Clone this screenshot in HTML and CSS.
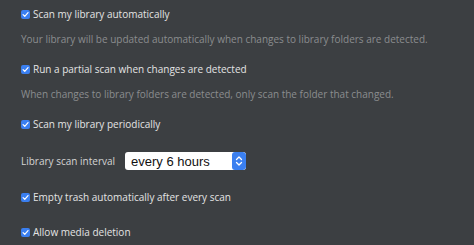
FILE: index.html
```html
<!DOCTYPE html>
<html>
<head>
<meta charset="utf-8">
<link rel="stylesheet" href="styles.css">
</head>
<body>
<div class="settings">
  <div class="check-row">
    <span class="box"><svg viewBox="0 0 10 10" width="9" height="9"><path d="M2.3 5.2 L4.2 7.1 L7.8 2.8" fill="none" stroke="#fff" stroke-width="1.3" stroke-linecap="round" stroke-linejoin="round"/></svg></span>
    <span class="label">Scan my library automatically</span>
  </div>
  <div class="desc">Your library will be updated automatically when changes to library folders are detected.</div>
  <div class="check-row">
    <span class="box"><svg viewBox="0 0 10 10" width="9" height="9"><path d="M2.3 5.2 L4.2 7.1 L7.8 2.8" fill="none" stroke="#fff" stroke-width="1.3" stroke-linecap="round" stroke-linejoin="round"/></svg></span>
    <span class="label">Run a partial scan when changes are detected</span>
  </div>
  <div class="desc">When changes to library folders are detected, only scan the folder that changed.</div>
  <div class="check-row">
    <span class="box"><svg viewBox="0 0 10 10" width="9" height="9"><path d="M2.3 5.2 L4.2 7.1 L7.8 2.8" fill="none" stroke="#fff" stroke-width="1.3" stroke-linecap="round" stroke-linejoin="round"/></svg></span>
    <span class="label">Scan my library periodically</span>
  </div>
  <div class="select-row">
    <span class="select-label">Library scan interval</span>
    <span class="select">
      <span class="select-text">every 6 hours</span>
      <span class="stepper"><svg viewBox="0 0 14 18" width="14" height="18"><path d="M4.5 7.5 L7 5 L9.5 7.5 M4.5 10.5 L7 13 L9.5 10.5" fill="none" stroke="#fff" stroke-width="1.3" stroke-linecap="round" stroke-linejoin="round"/></svg></span>
    </span>
  </div>
  <div class="check-row">
    <span class="box"><svg viewBox="0 0 10 10" width="9" height="9"><path d="M2.3 5.2 L4.2 7.1 L7.8 2.8" fill="none" stroke="#fff" stroke-width="1.3" stroke-linecap="round" stroke-linejoin="round"/></svg></span>
    <span class="label">Empty trash automatically after every scan</span>
  </div>
  <div class="check-row last">
    <span class="box"><svg viewBox="0 0 10 10" width="9" height="9"><path d="M2.3 5.2 L4.2 7.1 L7.8 2.8" fill="none" stroke="#fff" stroke-width="1.3" stroke-linecap="round" stroke-linejoin="round"/></svg></span>
    <span class="label">Allow media deletion</span>
  </div>
</div>
</body>
</html>
```
FILE: styles.css
```css
html, body {
  margin: 0;
  padding: 0;
  background: #3c3f42;
  width: 474px;
  height: 245px;
  overflow: hidden;
}
.settings {
  padding: 5px 0 0 21px;
  font-family: "Open Sans", sans-serif;
  font-size: 10px;
  display: flex;
  flex-direction: column;
}
.check-row {
  display: flex;
  align-items: center;
  height: 18px;
  gap: 3px;
}
.box {
  width: 9px;
  height: 9px;
  border-radius: 2px;
  background: #3a7ff0;
  display: flex;
  align-items: center;
  justify-content: center;
}
.box svg { display: block; }
.label {
  color: #e4e4e4;
  font-weight: 500;
}
.desc {
  color: #8b8d8f;
  height: 18px;
  line-height: 18px;
  margin: 7px 0 12px;
}
.select-row {
  display: flex;
  align-items: center;
  height: 20px;
  margin: 18px 0 17px;
}
.select-label {
  color: #d4d4d4;
  width: 104px;
  font-weight: 500;
}
.select {
  width: 121px;
  height: 18px;
  background: #fff;
  border-radius: 3px;
  display: flex;
  align-items: center;
  justify-content: space-between;
  overflow: hidden;
}
.select-text {
  font-family: "Liberation Sans", sans-serif;
  font-size: 13px;
  color: #111;
  padding-left: 6px;
}
.stepper {
  width: 14px;
  height: 18px;
  background: #3a7ff0;
  border-radius: 3px;
  display: flex;
}
.stepper svg { display: block; }
.check-row + .check-row { margin-top: 17px; }
```
